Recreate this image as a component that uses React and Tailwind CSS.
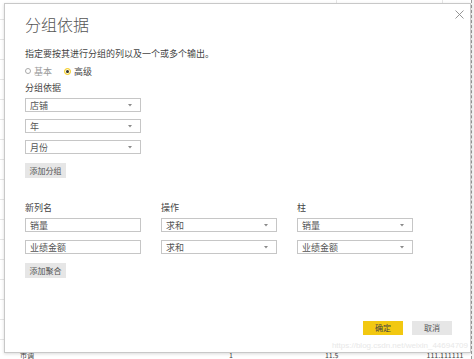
import React from 'react';

const font = { fontFamily: '"Noto Sans CJK SC", "Noto Sans", sans-serif' };

function Caret() {
  return (
    <svg width="4" height="3" viewBox="0 0 4 3" className="shrink-0">
      <path d="M0 0 L4 0 L2 2.5 Z" fill="#8a8a8a" />
    </svg>
  );
}

function Select({ value }) {
  return (
    <div className="w-[116px] h-[14px] border border-[#c6c6c6] bg-white flex items-center justify-between pl-[4px] pr-[8px]">
      <span className="text-[9px] leading-none text-[#555]">{value}</span>
      <Caret />
    </div>
  );
}

function Input({ value }) {
  return (
    <div className="w-[116px] h-[14px] border border-[#c6c6c6] bg-white flex items-center pl-[4px]">
      <span className="text-[9px] leading-none text-[#555]">{value}</span>
    </div>
  );
}

function GrayButton({ children }) {
  return (
    <div className="w-[41px] h-[15px] bg-[#e6e6e6] flex items-center justify-center text-[8px] text-[#555]">
      {children}
    </div>
  );
}

function Sheet() {
  const rows = Array.from({ length: 18 });
  return (
    <div className="absolute inset-0 bg-white">
      {rows.map((_, i) => (
        <div key={i} className="h-[20px] border-b border-[#e6e6e6] flex">
          <div className="w-[337px] border-r border-[#e6e6e6]" />
          <div className="w-[106px] border-r border-[#e6e6e6]" />
        </div>
      ))}
      <div className="absolute left-0 right-0 top-[352px] h-[7px] flex items-start text-[7px] leading-[7px] text-[#444]">
        <span className="ml-[20px]">市调</span>
        <span className="ml-[195px]">1</span>
        <span className="ml-[92px]">11.5</span>
        <span className="ml-[88px]">111.111111</span>
      </div>
      <div className="absolute right-0 top-0 bottom-0 w-[3px] border-l border-dashed border-[#999] bg-[#f4f4f4]" />
    </div>
  );
}

export default function App() {
  return (
    <div className="relative w-[474px] h-[359px] overflow-hidden bg-white" style={font}>
      <Sheet />
      <div className="absolute left-[4px] top-[3px] w-[467px] h-[350px] bg-white border border-[#c8c8c8] shadow-[0_1px_3px_rgba(0,0,0,0.15)] flex flex-col pl-[20px]">
        <div className="absolute right-[6px] top-[6px]">
          <svg width="9" height="9" viewBox="0 0 9 9">
            <path d="M0.5 0.5 L8.5 8.5 M8.5 0.5 L0.5 8.5" stroke="#8a8a8a" strokeWidth="0.9" />
          </svg>
        </div>
        <div className="mt-[10px] text-[16px] leading-[20px] text-[#555] font-light">分组依据</div>
        <div className="mt-[14px] text-[9px] leading-[12px] text-[#444]">指定要按其进行分组的列以及一个或多个输出。</div>
        <div className="mt-[5px] h-[12px] flex items-center text-[9px] leading-none">
          <span className="w-[6px] h-[6px] rounded-full border border-[#aaa]" />
          <span className="ml-[3px] text-[#999]">基本</span>
          <span className="ml-[12px] w-[7px] h-[7px] rounded-full border border-[#f2c811] bg-[#fff6cc] flex items-center justify-center">
            <span className="w-[3px] h-[3px] rounded-full bg-[#333]" />
          </span>
          <span className="ml-[3px] text-[#444]">高级</span>
        </div>
        <div className="mt-[5px] text-[9px] leading-[12px] text-[#444]">分组依据</div>
        <div className="mt-[4px] flex flex-col gap-[7px]">
          <Select value="店铺" />
          <Select value="年" />
          <Select value="月份" />
        </div>
        <div className="mt-[9px]">
          <GrayButton>添加分组</GrayButton>
        </div>
        <div className="mt-[24px] grid grid-cols-[116px_116px_116px] gap-x-[20px] text-[9px] leading-[12px] text-[#444]">
          <span>新列名</span>
          <span>操作</span>
          <span>柱</span>
        </div>
        <div className="mt-[4px] grid grid-cols-[116px_116px_116px] gap-x-[20px] gap-y-[8px]">
          <Input value="销量" />
          <Select value="求和" />
          <Select value="销量" />
          <Input value="业绩金额" />
          <Select value="求和" />
          <Select value="业绩金额" />
        </div>
        <div className="mt-[9px]">
          <GrayButton>添加聚合</GrayButton>
        </div>
        <div className="mt-[43px] flex justify-end gap-[9px] pr-[18px]">
          <div className="w-[40px] h-[14px] bg-[#f2c811] flex items-center justify-center text-[8px] text-[#444]">确定</div>
          <div className="w-[40px] h-[14px] bg-[#e6e6e6] flex items-center justify-center text-[8px] text-[#555]">取消</div>
        </div>
        <div className="absolute right-[2px] bottom-[1px] text-[8px] leading-[10px] text-[#e8e8e8]" style={{ fontFamily: '"Liberation Sans", sans-serif' }}>
          https://blog.csdn.net/weixin_44694709
        </div>
      </div>
    </div>
  );
}
